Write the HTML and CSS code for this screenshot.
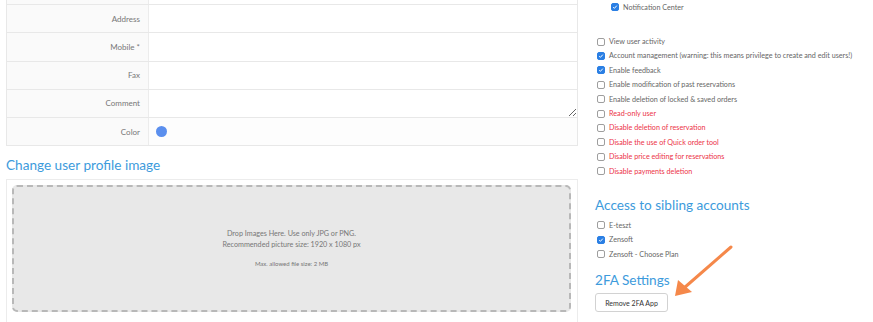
FILE: index.html
```html
<!DOCTYPE html>
<html lang="en">
<head>
    <meta charset="UTF-8">
    <meta name="viewport" content="width=device-width, initial-scale=1.0">
    <title>Edit user</title>
    <link rel="stylesheet" href="styles.css">
</head>
<body>
    <div class="page">
        <div class="left-col">
            <div class="form-table">
                <div class="row">
                    <span class="label"></span>
                    <div class="value"><input type="text" class="field"></div>
                </div>
                <div class="row">
                    <label class="label">Address</label>
                    <div class="value"><input type="text" class="field"></div>
                </div>
                <div class="row">
                    <label class="label">Mobile *</label>
                    <div class="value"><input type="text" class="field"></div>
                </div>
                <div class="row">
                    <label class="label">Fax</label>
                    <div class="value"><input type="text" class="field"></div>
                </div>
                <div class="row">
                    <label class="label">Comment</label>
                    <div class="value"><textarea class="field area"></textarea></div>
                </div>
                <div class="row">
                    <label class="label">Color</label>
                    <div class="value color-cell"><span class="color-dot"></span></div>
                </div>
            </div>

            <h2 class="section-title">Change user profile image</h2>
            <div class="upload-panel">
                <div class="dropzone">
                    <p>Drop Images Here. Use only JPG or PNG.<br>Recommended picture size: 1920 x 1080 px</p>
                    <p class="small">Max. allowed file size: 2 MB</p>
                </div>
            </div>
        </div>

        <div class="right-col">
            <ul class="checks sub">
                <li><input type="checkbox" checked><span>Notification Center</span></li>
            </ul>

            <ul class="checks perms">
                <li><input type="checkbox"><span>View user activity</span></li>
                <li><input type="checkbox" checked><span>Account management (warning: this means privilege to create and edit users!)</span></li>
                <li><input type="checkbox" checked><span>Enable feedback</span></li>
                <li><input type="checkbox"><span>Enable modification of past reservations</span></li>
                <li><input type="checkbox"><span>Enable deletion of locked &amp; saved orders</span></li>
                <li class="danger"><input type="checkbox"><span>Read-only user</span></li>
                <li class="danger"><input type="checkbox"><span>Disable deletion of reservation</span></li>
                <li class="danger"><input type="checkbox"><span>Disable the use of Quick order tool</span></li>
                <li class="danger"><input type="checkbox"><span>Disable price editing for reservations</span></li>
                <li class="danger"><input type="checkbox"><span>Disable payments deletion</span></li>
            </ul>

            <h2 class="section-title siblings-title">Access to sibling accounts</h2>
            <ul class="checks siblings">
                <li><input type="checkbox"><span>E-teszt</span></li>
                <li><input type="checkbox" checked><span>Zensoft</span></li>
                <li><input type="checkbox"><span>Zensoft - Choose Plan</span></li>
            </ul>

            <h2 class="section-title tfa-title">2FA Settings</h2>
            <button type="button" class="btn">Remove 2FA App</button>
        </div>
    </div>

    <!-- annotation arrow -->
    <svg class="arrow" width="70" height="64" viewBox="668 240 70 64">
        <line x1="731" y1="247" x2="684" y2="288" stroke="#f5884a" stroke-width="3" stroke-linecap="round"/>
        <polygon points="675,296 678,280 692,292" fill="#f5884a"/>
    </svg>
</body>
</html>
```

FILE: styles.css
```css
/* Global */
body {
    font-family: Lato, "Open Sans", sans-serif;
    margin: 0;
    padding: 0;
    background-color: #fff;
    color: #666;
    position: relative;
    overflow: hidden;
    height: 322px;
}

.page {
    display: flex;
    gap: 17px;
    padding: 0 6px;
}

/* Left column */
.left-col {
    width: 572px;
    flex: none;
}

.form-table {
    margin-top: -23px;
    border-left: 1px solid #e8e8e8;
    border-right: 1px solid #e8e8e8;
}

.row {
    display: grid;
    grid-template-columns: 142px 1fr;
    grid-template-rows: 100%;
    height: 28.2px;
    box-sizing: border-box;
    border-bottom: 1px solid #e8e8e8;
}

.label {
    display: flex;
    align-items: center;
    justify-content: flex-end;
    padding-right: 8px;
    background-color: #fafafa;
    border-right: 1px solid #ececec;
    font-size: 8px;
    color: #777;
}

.value {
    display: flex;
    min-height: 0;
    overflow: hidden;
    background-color: #fff;
}

.field {
    flex: 1;
    min-width: 0;
    border: none;
    outline: none;
    margin: 0;
    padding: 0 8px;
    background: transparent;
    font: inherit;
}

.area {
    height: 100%;
    min-height: 0;
    box-sizing: border-box;
    resize: vertical;
    padding-top: 4px;
}

.color-cell {
    align-items: center;
    padding-left: 7px;
    background-color: #fdfdfd;
}

.color-dot {
    width: 11px;
    height: 11px;
    border-radius: 50%;
    background-color: #5b8fee;
}

.section-title {
    font-size: 13.6px;
    font-weight: 400;
    color: #3d9bdc;
    line-height: 16px;
    margin: 0;
}

.left-col .section-title {
    margin-top: 11px;
    margin-bottom: 6px;
}

.upload-panel {
    border: 1px solid #ececec;
    padding: 5px 6px 20px 5px;
}

.dropzone {
    height: 127px;
    box-sizing: border-box;
    border: 2px dashed #b8b8b8;
    border-radius: 5px;
    background-color: #e8e8e8;
    display: flex;
    flex-direction: column;
    align-items: center;
    justify-content: center;
    text-align: center;
    color: #777;
}

.dropzone p {
    margin: 0;
    font-size: 7.2px;
    line-height: 11px;
}

.dropzone .small {
    font-size: 6px;
    margin-top: 8px;
}

/* Right column */
.right-col {
    flex: 1;
}

.checks {
    list-style: none;
    margin: 0;
    padding: 0;
}

.checks li {
    display: flex;
    align-items: center;
    height: 14.4px;
    font-size: 7.2px;
    color: #666;
}

.checks li.danger {
    color: #ec3347;
}

.checks input {
    appearance: none;
    -webkit-appearance: none;
    width: 8px;
    height: 8px;
    margin: 0 4px 0 2px;
    border: 1px solid #9e9e9e;
    border-radius: 2px;
    background-color: #fff;
    box-sizing: border-box;
    flex: none;
}

.checks input:checked {
    border-color: #2a7fe4;
    background-color: #2a7fe4;
    background-image: url("data:image/svg+xml,%3Csvg xmlns='http://www.w3.org/2000/svg' viewBox='0 0 8 8'%3E%3Cpath d='M1.6 4.2 3.2 5.8 6.4 2.2' fill='none' stroke='%23fff' stroke-width='1.3'/%3E%3C/svg%3E");
    background-size: 100% 100%;
}

.checks.sub {
    padding-left: 14px;
    margin-top: 0;
}

.checks.perms {
    margin-top: 20px;
}

.siblings-title {
    margin-top: 19px;
}

.checks.siblings {
    margin-top: 5px;
}

.tfa-title {
    margin-top: 11px;
}

.btn {
    margin-top: 5px;
    width: 73px;
    height: 19px;
    padding: 0;
    border: 1px solid #d2d2d2;
    border-radius: 3px;
    background-color: #fff;
    font-family: inherit;
    font-size: 7px;
    color: #333;
    cursor: pointer;
}

/* Annotation */
.arrow {
    position: absolute;
    left: 668px;
    top: 240px;
}
```
